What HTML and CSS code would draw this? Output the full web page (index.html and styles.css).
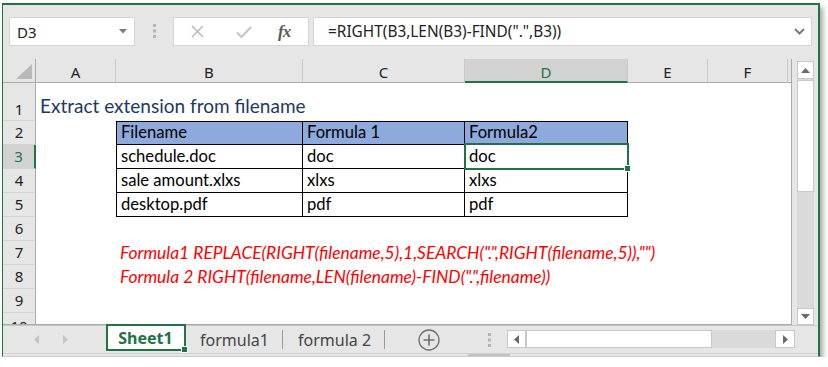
FILE: index.html
```html
<!DOCTYPE html>
<html lang="en">
<head>
    <meta charset="UTF-8">
    <title>Extract extension from filename</title>
    <link rel="stylesheet" href="styles.css">
</head>
<body>

    <div class="window">

        <!-- Formula bar -->
        <div class="formula-bar">
            <div class="name-box">
                <span>D3</span>
                <svg width="8" height="5" viewBox="0 0 8 5"><path d="M0 0h8L4 4.5z" fill="#7a7a7a"/></svg>
            </div>
            <div class="grip">
                <svg width="3" height="14" viewBox="0 0 3 14"><rect y="0" width="3" height="3" fill="#b5b5b5"/><rect y="5.5" width="3" height="3" fill="#b5b5b5"/><rect y="11" width="3" height="3" fill="#b5b5b5"/></svg>
            </div>
            <div class="fx-box">
                <svg class="btn-x" width="13" height="13" viewBox="0 0 13 13"><path d="M1 1L12 12M12 1L1 12" stroke="#b3b3b3" stroke-width="1.3" fill="none"/></svg>
                <svg class="btn-ok" width="16" height="12" viewBox="0 0 16 12"><path d="M1 6.5L5.5 11L15 1" stroke="#c4c4c4" stroke-width="2" fill="none"/></svg>
                <span class="fx">fx</span>
            </div>
            <div class="formula-input">
                <span>=RIGHT(B3,LEN(B3)-FIND(".",B3))</span>
                <svg width="11" height="7" viewBox="0 0 11 7"><path d="M1 1L5.5 5.5L10 1" stroke="#7a7a7a" stroke-width="2" fill="none"/></svg>
            </div>
        </div>

        <!-- Sheet grid and vertical scrollbar -->
        <div class="sheet-area">
            <div class="grid">
                <div class="corner"><svg width="16" height="15" viewBox="0 0 16 15"><path d="M16 0V15H0z" fill="#b9b9b9"/></svg></div>
                <div class="col-head">A</div>
                <div class="col-head">B</div>
                <div class="col-head">C</div>
                <div class="col-head selected">D</div>
                <div class="col-head">E</div>
                <div class="col-head">F</div>
                <div class="col-head last"></div>

                <div class="row-head tall">1</div>
                <div class="cell title span-4">Extract extension from filename</div>
                <div class="cell"></div>
                <div class="cell"></div>
                <div class="cell"></div>

                <div class="row-head">2</div>
                <div class="cell"></div>
                <div class="cell tc th first">Filename</div>
                <div class="cell tc th">Formula 1</div>
                <div class="cell tc th">Formula2</div>
                <div class="cell"></div>
                <div class="cell"></div>
                <div class="cell"></div>

                <div class="row-head selected">3</div>
                <div class="cell"></div>
                <div class="cell tc first">schedule.doc</div>
                <div class="cell tc">doc</div>
                <div class="cell tc active">doc</div>
                <div class="cell"></div>
                <div class="cell"></div>
                <div class="cell"></div>

                <div class="row-head">4</div>
                <div class="cell"></div>
                <div class="cell tc first">sale amount.xlxs</div>
                <div class="cell tc">xlxs</div>
                <div class="cell tc">xlxs</div>
                <div class="cell"></div>
                <div class="cell"></div>
                <div class="cell"></div>

                <div class="row-head">5</div>
                <div class="cell"></div>
                <div class="cell tc first">desktop.pdf</div>
                <div class="cell tc">pdf</div>
                <div class="cell tc">pdf</div>
                <div class="cell"></div>
                <div class="cell"></div>
                <div class="cell"></div>

                <div class="row-head">6</div>
                <div class="cell span-7"></div>

                <div class="row-head">7</div>
                <div class="cell"></div>
                <div class="cell note span-6">Formula1 REPLACE(RIGHT(filename,5),1,SEARCH(".",RIGHT(filename,5)),"")</div>

                <div class="row-head">8</div>
                <div class="cell"></div>
                <div class="cell note span-6">Formula 2 RIGHT(filename,LEN(filename)-FIND(".",filename))</div>

                <div class="row-head">9</div>
                <div class="cell span-7"></div>

                <div class="row-head cut">10</div>
                <div class="cell span-7"></div>
            </div>

            <div class="vscroll">
                <div class="sb-btn up"><svg width="9" height="5" viewBox="0 0 9 5"><path d="M0 5L4.5 0L9 5z" fill="#6a6a6a"/></svg></div>
                <div class="v-thumb"></div>
                <div class="v-track"></div>
                <div class="sb-btn down"><svg width="9" height="5" viewBox="0 0 9 5"><path d="M0 0L4.5 5L9 0z" fill="#6a6a6a"/></svg></div>
            </div>
        </div>

        <!-- Sheet tabs -->
        <div class="tab-bar">
            <div class="tab-nav">
                <svg width="5" height="9" viewBox="0 0 5 9"><path d="M5 0V9L0 4.5z" fill="#c3c3c3"/></svg>
                <svg width="5" height="9" viewBox="0 0 5 9"><path d="M0 0V9L5 4.5z" fill="#c3c3c3"/></svg>
            </div>
            <div class="tab active">Sheet1</div>
            <div class="tab">formula1</div>
            <div class="tab">formula 2</div>
            <div class="add-sheet">
                <svg width="22" height="22" viewBox="0 0 22 22"><circle cx="11" cy="11" r="10" stroke="#6f6f6f" stroke-width="1.3" fill="none"/><path d="M11 5.5V16.5M5.5 11H16.5" stroke="#6f6f6f" stroke-width="1.6"/></svg>
            </div>
            <div class="tab-grip">
                <svg width="3" height="14" viewBox="0 0 3 14"><rect y="0" width="3" height="3" fill="#b5b5b5"/><rect y="5.5" width="3" height="3" fill="#b5b5b5"/><rect y="11" width="3" height="3" fill="#b5b5b5"/></svg>
            </div>
            <div class="hscroll">
                <div class="sb-btn left"><svg width="5" height="9" viewBox="0 0 5 9"><path d="M5 0V9L0 4.5z" fill="#6a6a6a"/></svg></div>
                <div class="h-thumb"></div>
                <div class="h-track"></div>
                <div class="sb-btn right"><svg width="5" height="9" viewBox="0 0 5 9"><path d="M0 0V9L5 4.5z" fill="#6a6a6a"/></svg></div>
            </div>
        </div>
        <div class="bottom-strip"><div class="split-handle"></div></div>

    </div>

</body>
</html>
```

FILE: styles.css
```css
body {
    margin: 0;
    padding: 3px 0 0 2px;
    background-color: #fff;
    font-family: "Noto Sans", "Open Sans", sans-serif;
}
.window {
    width: 818px;
    height: 354px;
    box-sizing: border-box;
    background-color: #e6e6e6;
    border-top: 2px solid #217346;
    border-left: 1px solid #217346;
    border-right: 2px solid #217346;
    border-bottom: 1px solid #cdcdcd;
    box-shadow: 3px 4px 5px rgba(0, 0, 0, 0.35);
    display: flex;
    flex-direction: column;
}

/* formula bar */
.formula-bar {
    height: 54px;
    box-sizing: border-box;
    padding: 12px 6px 0 6px;
    display: flex;
    align-items: flex-start;
}
.name-box,
.fx-box,
.formula-input {
    height: 29px;
    box-sizing: border-box;
    background-color: #fff;
    border: 1px solid #d5d5d5;
    display: flex;
    align-items: center;
}
.name-box {
    width: 126px;
    padding: 0 7px 0 7px;
    justify-content: space-between;
    font-size: 15px;
    color: #222;
}
.grip {
    width: 38px;
    display: flex;
    justify-content: center;
    padding-top: 7px;
}
.fx-box {
    width: 136px;
}
.btn-x {
    margin-left: 17px;
}
.btn-ok {
    margin-left: 32px;
}
.fx {
    margin-left: 26px;
    font-family: "Liberation Serif", serif;
    font-style: italic;
    font-weight: bold;
    font-size: 17px;
    color: #5a5a5a;
    letter-spacing: -1px;
}
.formula-input {
    flex: 1;
    margin-left: 4px;
    padding: 0 6px 0 14px;
    justify-content: space-between;
    font-size: 15.4px;
    color: #222;
}

/* sheet */
.sheet-area {
    height: 266px;
    display: flex;
}
.grid {
    width: 789px;
    height: 266px;
    box-sizing: border-box;
    overflow: hidden;
    background-color: #fff;
    border-right: 1px solid #ababab;
    border-bottom: 1px solid #ababab;
    display: grid;
    grid-template-columns: 33px 80px 187px 162px 163px 80px 80px 1fr;
    grid-template-rows: 24px 38px repeat(8, 24px) 12px;
}
.corner,
.col-head,
.row-head {
    background-color: #e6e6e6;
    box-sizing: border-box;
    color: #222;
    font-size: 15px;
}
.corner {
    border-right: 1px solid #ababab;
    border-bottom: 1px solid #ababab;
    display: flex;
    align-items: flex-end;
    justify-content: flex-end;
    padding: 0 3px 3px 0;
}
.col-head {
    border-bottom: 1px solid #ababab;
    border-right: 1px solid #c8c8c8;
    text-align: center;
    line-height: 26px;
}
.col-head.last {
    border-right: none;
}
.col-head.selected {
    background-color: #d2d2d2;
    color: #217346;
    border-bottom: 2px solid #217346;
}
.row-head {
    border-right: 1px solid #ababab;
    border-bottom: 1px solid #d4d4d4;
    text-align: center;
    line-height: 23px;
    overflow: hidden;
}
.row-head.tall {
    line-height: 52px;
}
.row-head.selected {
    background-color: #d2d2d2;
    color: #217346;
    border-right: 2px solid #217346;
}
.row-head.cut {
    border-bottom: none;
    line-height: 26px;
}
.cell {
    box-sizing: border-box;
    display: flex;
    align-items: flex-end;
    padding: 0 0 2px 4px;
    font-family: Lato, "Liberation Sans", sans-serif;
    font-size: 16.6px;
    color: #000;
    white-space: nowrap;
}
.span-4 {
    grid-column: span 4;
}
.span-6 {
    grid-column: span 6;
}
.span-7 {
    grid-column: span 7;
}
.title {
    font-size: 19px;
    color: #1f3763;
    padding-bottom: 4px;
}
.tc {
    border-right: 1px solid #000;
    border-bottom: 1px solid #000;
}
.tc.first {
    border-left: 1px solid #000;
}
.th {
    background-color: #8ea9db;
    border-top: 1px solid #000;
}
.active {
    position: relative;
}
.active::after {
    content: "";
    position: absolute;
    top: -2px;
    left: -1px;
    right: -2px;
    bottom: -2px;
    border: 2px solid #217346;
}
.active::before {
    content: "";
    position: absolute;
    right: -4px;
    bottom: -4px;
    width: 5px;
    height: 5px;
    background-color: #217346;
    border: 1px solid #fff;
    z-index: 1;
}
.note {
    font-style: italic;
    font-size: 17.4px;
    color: #ff0000;
}

/* vertical scrollbar */
.vscroll {
    width: 17px;
    margin: 2px 0 0 5px;
    display: flex;
    flex-direction: column;
    background-color: #dadada;
}
.sb-btn {
    box-sizing: border-box;
    background-color: #fff;
    border: 1px solid #c8c8c8;
    display: flex;
    align-items: center;
    justify-content: center;
}
.sb-btn.up {
    height: 18px;
}
.sb-btn.down {
    height: 17px;
}
.v-thumb {
    height: 112px;
    margin-top: 1px;
    box-sizing: border-box;
    background-color: #fff;
    border: 1px solid #c8c8c8;
}
.v-track {
    flex: 1;
}

/* sheet tabs */
.tab-bar {
    height: 28px;
    display: flex;
    align-items: stretch;
    font-size: 16px;
    color: #444;
    border-top: 1px solid #c6c6c6;
    box-sizing: border-box;
}
.tab-nav {
    width: 103px;
    display: flex;
    align-items: center;
    gap: 24px;
    padding-left: 31px;
    box-sizing: border-box;
}
.tab {
    padding: 0 0 0 15px;
    display: flex;
    align-items: center;
    position: relative;
    white-space: nowrap;
    box-sizing: border-box;
}
.tab + .tab::after {
    content: "";
    position: absolute;
    right: 0;
    top: 4px;
    bottom: 4px;
    border-right: 1px solid #9a9a9a;
}
.tab.active {
    width: 79px;
    justify-content: center;
    background-color: #fff;
    border-left: 1px solid #c6c6c6;
    border-right: 1px solid #c6c6c6;
    border-bottom: 2px solid #217346;
    height: 25px;
    font-weight: bold;
    color: #217346;
    padding: 0;
}
.tab:nth-child(3) {
    width: 98px;
}
.tab:nth-child(4) {
    width: 102px;
}
.add-sheet {
    width: 88px;
    display: flex;
    align-items: center;
    padding-left: 33px;
    box-sizing: border-box;
}
.tab-grip {
    width: 34px;
    display: flex;
    align-items: center;
    padding-left: 15px;
    box-sizing: border-box;
}
.hscroll {
    width: 288px;
    height: 18px;
    margin-top: 4px;
    display: flex;
    background-color: #dadada;
}
.sb-btn.left,
.sb-btn.right {
    width: 19px;
}
.sb-btn.right {
    width: 20px;
}
.h-thumb {
    width: 186px;
    box-sizing: border-box;
    background-color: #fff;
    border: 1px solid #c8c8c8;
}
.h-track {
    flex: 1;
}
.bottom-strip {
    flex: 1;
    position: relative;
    border-top: 1px solid #d0d0d0;
}
.split-handle {
    position: absolute;
    left: 465px;
    top: 0;
    width: 42px;
    height: 2px;
    background-color: #c2c2c2;
}
```
